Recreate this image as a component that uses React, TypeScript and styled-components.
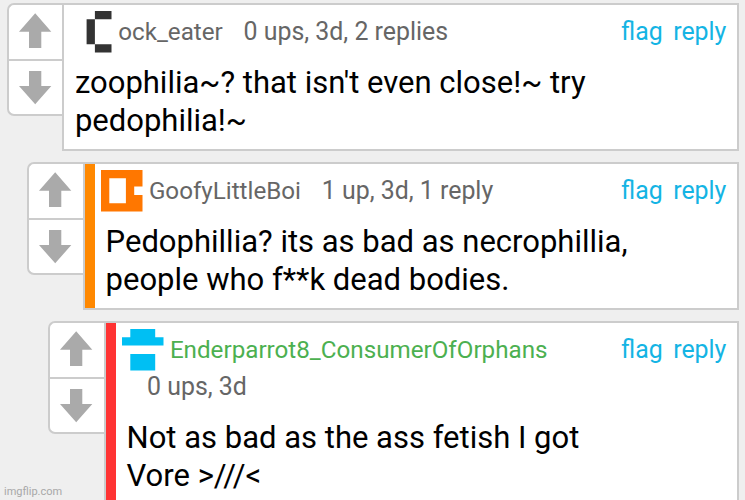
import React from 'react';
import styled, { createGlobalStyle } from 'styled-components';

const GlobalStyle = createGlobalStyle`
  body {
    margin: 0;
    background: #efefef;
    font-family: Roboto, 'Liberation Sans', sans-serif;
  }
`;

const Page = styled.main`
  position: relative;
  box-sizing: border-box;
  width: 745px;
  height: 500px;
  padding: 3px 6px 0 7px;
  overflow: hidden;
  background: #efefef;
`;

const Comment = styled.article<{ $indent: number }>`
  display: flex;
  align-items: flex-start;
  margin: 0 0 11px ${({ $indent }) => $indent}px;
`;

const Votes = styled.div`
  box-sizing: border-box;
  flex: none;
  width: 55.4px;
  height: 113px;
  border: 2px solid #ccc;
  border-right: none;
  border-radius: 7px 0 0 7px;
  background: #fff;
`;

const VoteButton = styled.button`
  display: block;
  box-sizing: border-box;
  width: 100%;
  height: 54px;
  padding: 0;
  border: none;
  background: none;
  cursor: pointer;

  & + & {
    height: 55px;
    border-top: 2px solid #ccc;
  }

  svg {
    display: block;
  }
`;

const Card = styled.div<{ $height: number; $stripe?: string }>`
  box-sizing: border-box;
  display: flex;
  flex: 1;
  height: ${({ $height }) => $height}px;
  border: 2px solid #ccc;
  background: #fff;

  &::before {
    content: '';
    flex: none;
    width: ${({ $stripe }) => ($stripe ? 10.3 : 0)}px;
    background: ${({ $stripe }) => $stripe || 'none'};
  }
`;

const Content = styled.div`
  flex: 1;
  min-width: 0;
  padding: 6px 10.6px 0 6px;
`;

const Header = styled.header`
  display: flex;
  align-items: flex-start;
  height: 42px;
  font-size: 24.9px;
  line-height: 41px;
  white-space: nowrap;
`;

const Avatar = styled.svg`
  flex: none;
  width: 41.5px;
  height: 41.5px;
  margin-right: 6.3px;
`;

const User = styled.span<{ $color?: string }>`
  color: ${({ $color }) => $color || '#666'};
  font-size: 24.2px;
  line-height: 43px;
`;

const Stats = styled.span<{ $wrapped?: boolean }>`
  display: ${({ $wrapped }) => ($wrapped ? 'block' : 'inline')};
  margin-left: ${({ $wrapped }) => ($wrapped ? 25 : 20.8)}px;
  color: #666;
  font-size: 24.9px;
  line-height: ${({ $wrapped }) => ($wrapped ? '31px' : 'inherit')};
`;

const Actions = styled.nav`
  display: flex;
  gap: 10.5px;
  margin-left: auto;
`;

const Action = styled.a`
  color: #14b4e4;
  cursor: pointer;
`;

const Message = styled.p<{ $lowered?: boolean }>`
  margin: ${({ $lowered }) => ($lowered ? 17 : 11.3)}px 0 0 4.5px;
  color: #000;
  font-size: 31px;
  line-height: 37.5px;
  white-space: pre-line;
`;

const Watermark = styled.span`
  position: absolute;
  left: 4px;
  bottom: 1px;
  color: #a8a8a8;
  font-size: 11px;
  line-height: 14px;
`;

interface CommentData {
  user: string;
  userColor?: string;
  stats: string;
  wrapStats?: boolean;
  text: string;
  stripe?: string;
  indent: number;
  height: number;
  avatar: string;
  avatarColor: string;
}

// avatars are drawn on a 5x5 grid
const comments: CommentData[] = [
  {
    user: 'ock_eater',
    stats: '0 ups, 3d, 2 replies',
    text: "zoophilia~? that isn't even close!~ try\npedophilia!~",
    indent: 0,
    height: 148,
    avatar: 'M3 0h2v1H3zM2 1h1v3H2zM3 4h2v1H3z',
    avatarColor: '#333',
  },
  {
    user: 'GoofyLittleBoi',
    stats: '1 up, 3d, 1 reply',
    text: 'Pedophillia? its as bad as necrophillia,\npeople who f**k dead bodies.',
    stripe: '#ff8800',
    indent: 20.4,
    height: 148,
    avatar: 'M0 0h5v2H4v1h1v2H0zM1 1v3h2V1z',
    avatarColor: '#ff7700',
  },
  {
    user: 'Enderparrot8_ConsumerOfOrphans',
    userColor: '#4cb050',
    stats: '0 ups, 3d',
    wrapStats: true,
    text: 'Not as bad as the ass fetish I got\nVore >///<',
    stripe: '#ff3333',
    indent: 41.4,
    height: 190,
    avatar: 'M1 0h3v1h1v1H0V1h1zM1 3h3v2H1z',
    avatarColor: '#00bff3',
  },
];

const CommentItem: React.FC<{ data: CommentData }> = ({ data }) => (
  <Comment $indent={data.indent}>
    <Votes>
      <VoteButton>
        <svg width="53" height="54" viewBox="0 0 53 54" fill="#aaa">
          <path d="M26.2 8.3 42.3 26.8H32.3V43H20V26.8H10z" />
        </svg>
      </VoteButton>
      <VoteButton>
        <svg width="53" height="53" viewBox="0 0 53 53" fill="#aaa">
          <path d="M20 10H32.3V25H42.3L26.2 43.3 10 25H20z" />
        </svg>
      </VoteButton>
    </Votes>
    <Card $height={data.height} $stripe={data.stripe}>
      <Content>
        <Header>
          <Avatar viewBox="0 0 5 5" fill={data.avatarColor}>
            <path d={data.avatar} fillRule="evenodd" />
          </Avatar>
          <User $color={data.userColor}>{data.user}</User>
          {!data.wrapStats && <Stats>{data.stats}</Stats>}
          <Actions>
            <Action>flag</Action>
            <Action>reply</Action>
          </Actions>
        </Header>
        {data.wrapStats && <Stats $wrapped>{data.stats}</Stats>}
        <Message $lowered={data.wrapStats}>{data.text}</Message>
      </Content>
    </Card>
  </Comment>
);

const App: React.FC = () => (
  <>
    <GlobalStyle />
    <Page>
      {comments.map((comment) => (
        <CommentItem key={comment.user} data={comment} />
      ))}
      <Watermark>imgflip.com</Watermark>
    </Page>
  </>
);

export default App;
